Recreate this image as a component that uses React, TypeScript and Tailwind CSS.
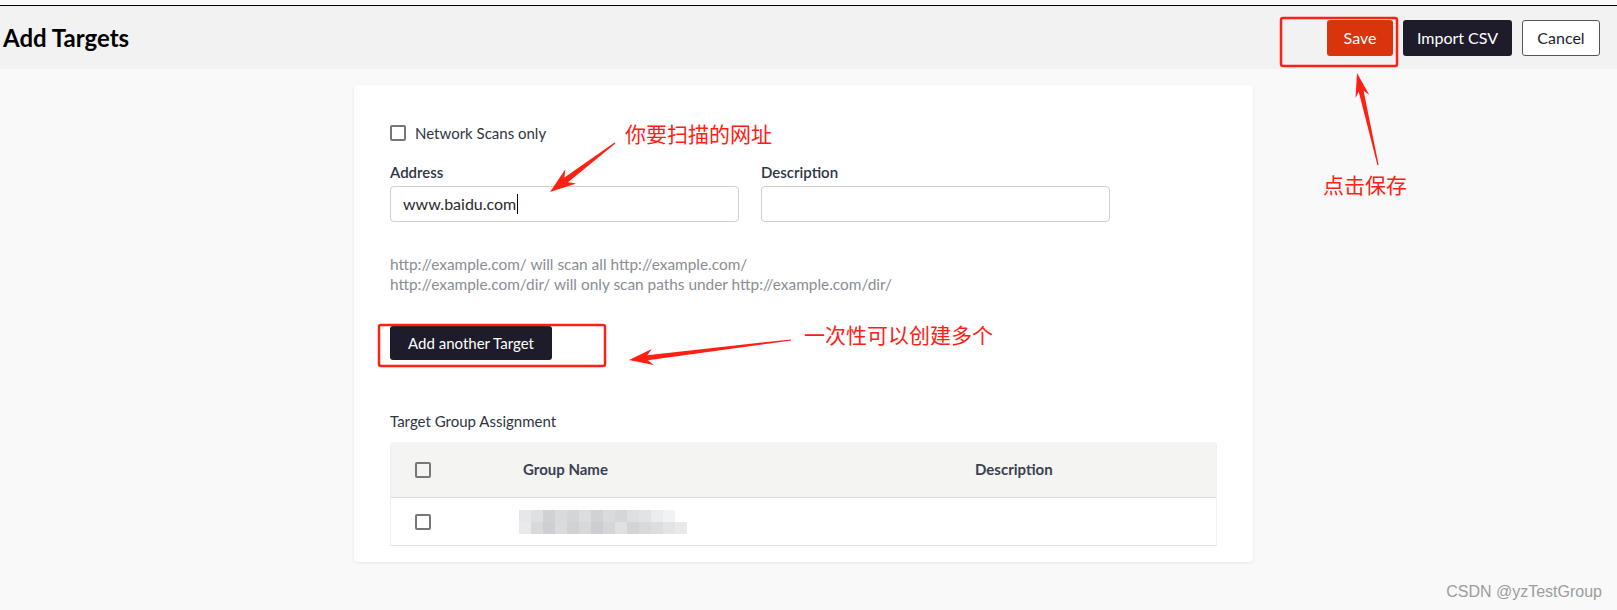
import type { ReactNode } from 'react'

const RED = '#ff2014'
const UI_FONT = { fontFamily: 'Lato, "Noto Sans", sans-serif' }
const CJK_FONT = { fontFamily: '"Noto Sans CJK SC", "Noto Sans", sans-serif' }

type Pt = [number, number]

// tapered annotation arrow, from thin tail to a pointed head
const arrowPoints = (tail: Pt, tip: Pt, head: number, hw: number, sw: number) => {
  const dx = tip[0] - tail[0]
  const dy = tip[1] - tail[1]
  const len = Math.hypot(dx, dy)
  const ux = dx / len
  const uy = dy / len
  const nx = -uy
  const ny = ux
  const at = (back: number, side: number): Pt => [
    tip[0] - ux * back + nx * side,
    tip[1] - uy * back + ny * side,
  ]
  const pts: Pt[] = [
    [tail[0] + nx * 0.6, tail[1] + ny * 0.6],
    at(head * 0.78, sw),
    at(head, hw),
    tip,
    at(head, -hw),
    at(head * 0.78, -sw),
    [tail[0] - nx * 0.6, tail[1] - ny * 0.6],
  ]
  return pts.map((p) => `${p[0].toFixed(1)},${p[1].toFixed(1)}`).join(' ')
}

const Checkbox = () => (
  <span className="block h-4 w-4 shrink-0 rounded-[2px] border-2 border-[#777]" />
)

const Button = ({
  children,
  className,
}: {
  children: ReactNode
  className: string
}) => (
  <button
    className={`flex h-9 items-center justify-center rounded-[3px] text-[16px] ${className}`}
  >
    {children}
  </button>
)

const BLUR_CELLS = [
  ['#e6e7e8', '#dfe0e1', '#cfd1d3', '#d9dadb', '#d3d5d7', '#dcdddf', '#d1d2d4', '#dadbdc', '#d4d6d8', '#dedfe0', '#e2e3e4', '#ebeced', '#f1f2f3', '#ffffff'],
  ['#e9eaeb', '#d8d9db', '#cdd0d2', '#dadbdd', '#d0d2d4', '#d7d8da', '#cccfd1', '#d5d6d8', '#dee0e2', '#d3d4d6', '#d8d9da', '#dcdddf', '#e3e4e5', '#e8e9ea'],
]

const BlurredName = () => (
  <div className="flex flex-col">
    {BLUR_CELLS.map((row, r) => (
      <div key={r} className="flex">
        {row.map((c, i) => (
          <span key={i} className="block h-3 w-3" style={{ backgroundColor: c }} />
        ))}
      </div>
    ))}
  </div>
)

export default function App() {
  return (
    <div
      className="relative h-[610px] w-full overflow-hidden bg-[#f9f9f9] pt-[5px] text-[#2f3542]"
      style={UI_FONT}
    >
      <div className="h-px w-full bg-black" />
      <header className="flex h-[63px] items-center justify-between bg-[#f2f2f2] pl-[3px] pr-[17px]">
        <h1 className="text-[24px] font-bold text-black">Add Targets</h1>
        <div className="flex gap-[10px]">
          <Button className="w-[66px] bg-[#da340c] text-white">Save</Button>
          <Button className="w-[109px] bg-[#1e1c2a] text-white">Import CSV</Button>
          <Button className="w-[78px] border border-[#555] bg-white text-[#1e1c2a]">
            Cancel
          </Button>
        </div>
      </header>

      <main className="ml-[354px] mt-4 w-[899px] rounded-[4px] bg-white px-9 pb-4 pt-[38px] shadow-[0_1px_3px_rgba(0,0,0,0.08)]">
        <label className="flex h-5 items-center gap-[9px] text-[15px]">
          <Checkbox />
          Network Scans only
        </label>

        <div className="mt-[19px] flex gap-[22px]">
          <div className="w-[349px]">
            <div className="h-5 text-[15px] font-semibold leading-5">Address</div>
            <div className="mt-1 flex h-9 items-center rounded-[4px] border border-[#cfcfcf] px-[12px] text-[16px] text-[#2a2a2a]">
              www.baidu.com
              <span className="ml-px block h-5 w-px bg-black" />
            </div>
          </div>
          <div className="w-[349px]">
            <div className="h-5 text-[15px] font-semibold leading-5">Description</div>
            <div className="mt-1 h-9 rounded-[4px] border border-[#cfcfcf]" />
          </div>
        </div>

        <div className="mt-8 text-[15.4px] leading-5 text-[#8a8d93]">
          <p>http://example.com/ will scan all http://example.com/</p>
          <p>http://example.com/dir/ will only scan paths under http://example.com/dir/</p>
        </div>

        <button className="mt-8 flex h-[34px] w-[162px] items-center justify-center rounded-[3px] bg-[#1e1c2a] text-[15px] text-white">
          Add another Target
        </button>

        <div className="mt-[51px] h-5 text-[15px] leading-5">Target Group Assignment</div>

        <div className="mt-[11px] overflow-hidden rounded-t-[4px] border-x border-[#f0f0f0]">
          <div className="grid h-14 grid-cols-[132px_452px_1fr] items-center border-b border-[#dcdcdc] bg-[#f4f4f2] text-[15px] font-bold text-[#3a4150]">
            <div className="pl-6">
              <Checkbox />
            </div>
            <div>Group Name</div>
            <div>Description</div>
          </div>
          <div className="grid h-12 grid-cols-[132px_452px_1fr] items-center border-b border-[#e2e2e2]">
            <div className="pl-6">
              <Checkbox />
            </div>
            <div className="-ml-1">
              <BlurredName />
            </div>
            <div />
          </div>
        </div>
      </main>

      {/* screenshot annotations */}
      <svg className="pointer-events-none absolute inset-0 h-full w-full" width="1617" height="610">
        <rect x="1281" y="18" width="116" height="48" rx="2" fill="none" stroke={RED} strokeWidth="2.5" />
        <rect x="379" y="325" width="226" height="41" rx="2" fill="none" stroke={RED} strokeWidth="2.5" />
        <polygon points={arrowPoints([1378, 165], [1357, 73], 24, 7, 2.5)} fill={RED} />
        <polygon points={arrowPoints([615, 143], [550, 192], 26, 9, 3)} fill={RED} />
        <polygon points={arrowPoints([791, 340], [629, 360], 24, 8, 2.5)} fill={RED} />
      </svg>
      <div
        className="absolute left-[625px] top-[121px] text-[21px] leading-6"
        style={{ ...CJK_FONT, color: RED }}
      >
        你要扫描的网址
      </div>
      <div
        className="absolute left-[1323px] top-[172px] text-[21px] leading-6"
        style={{ ...CJK_FONT, color: RED }}
      >
        点击保存
      </div>
      <div
        className="absolute left-[804px] top-[322px] text-[21px] leading-6"
        style={{ ...CJK_FONT, color: RED }}
      >
        一次性可以创建多个
      </div>
      <div
        className="absolute right-[15px] top-[583px] text-[16px] leading-[18px] text-[#9d9d9d]"
        style={{ fontFamily: '"Liberation Sans", Arial, sans-serif' }}
      >
        CSDN @yzTestGroup
      </div>
    </div>
  )
}
